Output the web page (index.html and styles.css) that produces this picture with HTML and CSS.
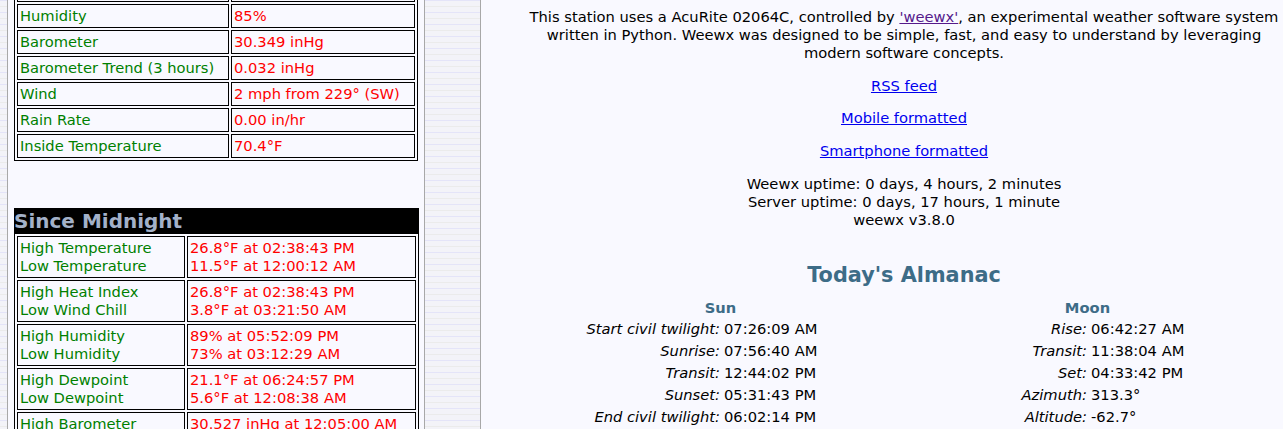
FILE: index.html
```html
<!DOCTYPE html>
<html lang="en">
<head>
<meta charset="utf-8">
<title>Weather station</title>
<link rel="stylesheet" href="styles.css">
</head>
<body>
<div class="page">
  <div class="stats">
    <table class="cond">
      <tr class="hidden-row"><td class="label"></td><td class="data"></td></tr>
      <tr><td class="label">Humidity</td><td class="data">85%</td></tr>
      <tr><td class="label">Barometer</td><td class="data">30.349 inHg</td></tr>
      <tr><td class="label">Barometer Trend (3 hours)</td><td class="data">0.032 inHg</td></tr>
      <tr><td class="label">Wind</td><td class="data">2 mph from 229° (SW)</td></tr>
      <tr><td class="label">Rain Rate</td><td class="data">0.00 in/hr</td></tr>
      <tr><td class="label">Inside Temperature</td><td class="data">70.4°F</td></tr>
    </table>

    <div class="stats-header">Since Midnight</div>
    <table class="mid">
      <tr><td class="label">High Temperature<br>Low Temperature</td><td class="data">26.8°F at 02:38:43 PM<br>11.5°F at 12:00:12 AM</td></tr>
      <tr><td class="label">High Heat Index<br>Low Wind Chill</td><td class="data">26.8°F at 02:38:43 PM<br>3.8°F at 03:21:50 AM</td></tr>
      <tr><td class="label">High Humidity<br>Low Humidity</td><td class="data">89% at 05:52:09 PM<br>73% at 03:12:29 AM</td></tr>
      <tr><td class="label">High Dewpoint<br>Low Dewpoint</td><td class="data">21.1°F at 06:24:57 PM<br>5.6°F at 12:08:38 AM</td></tr>
      <tr><td class="label">High Barometer<br>Low Barometer</td><td class="data">30.527 inHg at 12:05:00 AM<br>30.349 inHg at 06:30:00 PM</td></tr>
    </table>
  </div>

  <div class="content">
    <p class="intro">This station uses a AcuRite 02064C, controlled by <a class="visited" href="#weewx">'weewx'</a>, an experimental weather software system<br>written in Python. Weewx was designed to be simple, fast, and easy to understand by leveraging<br>modern software concepts.</p>
    <p><a href="#rss">RSS feed</a></p>
    <p><a href="#mobile">Mobile formatted</a></p>
    <p><a href="#smartphone">Smartphone formatted</a></p>
    <p>Weewx uptime: 0 days, 4 hours, 2 minutes<br>Server uptime: 0 days, 17 hours, 1 minute<br>weewx v3.8.0</p>

    <div class="almanac">
      <h2 class="almanac-title">Today's Almanac</h2>
      <div class="celestial">
        <div class="cel-col">
          <div class="cel-head">Sun</div>
          <table class="cel-table">
            <tr><td class="cel-label">Start civil twilight:</td><td class="cel-data">07:26:09 AM</td></tr>
            <tr><td class="cel-label">Sunrise:</td><td class="cel-data">07:56:40 AM</td></tr>
            <tr><td class="cel-label">Transit:</td><td class="cel-data">12:44:02 PM</td></tr>
            <tr><td class="cel-label">Sunset:</td><td class="cel-data">05:31:43 PM</td></tr>
            <tr><td class="cel-label">End civil twilight:</td><td class="cel-data">06:02:14 PM</td></tr>
          </table>
        </div>
        <div class="cel-col">
          <div class="cel-head">Moon</div>
          <table class="cel-table">
            <tr><td class="cel-label">Rise:</td><td class="cel-data">06:42:27 AM</td></tr>
            <tr><td class="cel-label">Transit:</td><td class="cel-data">11:38:04 AM</td></tr>
            <tr><td class="cel-label">Set:</td><td class="cel-data">04:33:42 PM</td></tr>
            <tr><td class="cel-label">Azimuth:</td><td class="cel-data">313.3°</td></tr>
            <tr><td class="cel-label">Altitude:</td><td class="cel-data">-62.7°</td></tr>
          </table>
        </div>
      </div>
    </div>
  </div>
</div>
</body>
</html>
```

FILE: styles.css
```css
html, body {
  margin: 0;
  padding: 0;
  height: 100%;
  overflow: hidden;
}

body {
  font-family: "DejaVu Sans", Verdana, sans-serif;
  font-size: 14.7px;
  line-height: 18px;
  color: #000;
  background-color: #f3f3f8;
  background-image: repeating-linear-gradient(to bottom,
    #e4e4f8 0, #e4e4f8 1px,
    transparent 1px, transparent 6px,
    #ebebeb 6px, #ebebeb 7px,
    transparent 7px, transparent 12px);
}

.page {
  display: flex;
  align-items: stretch;
  min-height: 100vh;
}

/* ---------- left stats panel ---------- */
.stats {
  margin-left: 7px;
  width: 410px;
  padding-left: 6px;
  border-left: 1px solid #a8a8a8;
  border-right: 1px solid #a8a8a8;
  background: #f9f9ff;
  flex: none;
}

.cond, .mid {
  border: 1px solid #000;
  border-spacing: 2px;
  table-layout: fixed;
}

.cond {
  width: 404px;
  margin-top: -25px;
}

.mid {
  width: 405px;
}

.cond td, .mid td {
  border: 1px solid #000;
  padding: 2px;
  box-sizing: border-box;
  white-space: nowrap;
  overflow: hidden;
  vertical-align: top;
}

.hidden-row td {
  height: 24px;
}

.cond td.label { width: 212px; }
.mid td.label { width: 168px; }

td.label { color: #008000; }
td.data { color: #ff0000; }

.stats-header {
  margin-top: 47px;
  width: 405px;
  height: 25px;
  box-sizing: border-box;
  padding-top: 2px;
  line-height: 23px;
  background: #000;
  color: #a3b1c9;
  font-size: 20px;
  font-weight: bold;
  white-space: nowrap;
}

/* ---------- right content panel ---------- */
.content {
  flex: 1;
  margin-left: 55px;
  border-left: 1px solid #a8a8a8;
  background: #f9f9ff;
  padding: 8px 0 0 44px;
  text-align: center;
  min-width: 0;
}

.content p {
  margin: 14.67px 0;
  white-space: nowrap;
}

.content p.intro {
  margin-top: 0;
}

a { color: #0000ee; }
a.visited { color: #551a8b; }

.almanac {
  width: 734px;
  margin: 0 auto;
}

.almanac-title {
  margin: 34px 0 0;
  font-size: 20.8px;
  line-height: 24px;
  font-weight: bold;
  color: #3d6c87;
}

.celestial {
  display: flex;
  text-align: left;
}

.cel-col {
  flex: 1;
}

.cel-head {
  margin-top: 12px;
  text-align: center;
  font-weight: bold;
  color: #3d6c87;
}

.cel-table {
  margin-left: 28px;
  border-spacing: 2px;
}

.cel-table td {
  padding: 1px;
  white-space: nowrap;
}

.cel-label {
  width: 152px;
  text-align: right;
  font-style: italic;
}

.cel-data {
  text-align: left;
}
```
